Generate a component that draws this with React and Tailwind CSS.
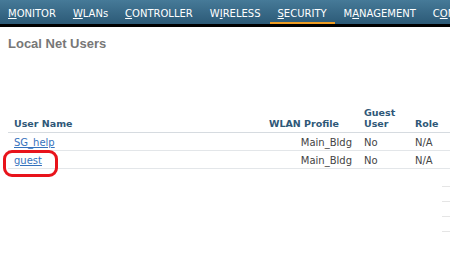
export default function App() {
  const nav = [
    { t: "MONITOR", u: 0 },
    { t: "WLANs", u: 0 },
    { t: "CONTROLLER", u: 0 },
    { t: "WIRELESS", u: 1 },
    { t: "SECURITY", u: 0, active: true },
    { t: "MANAGEMENT", u: 1 },
    { t: "COMMANDS", u: 1 },
  ];
  const rows = [
    { name: "SG_help", profile: "Main_Bldg", guest: "No", role: "N/A" },
    { name: "guest", profile: "Main_Bldg", guest: "No", role: "N/A" },
  ];
  const font = { fontFamily: '"DejaVu Sans", Verdana, sans-serif' };
  return (
    <div className="w-[450px] h-[255px] bg-white overflow-hidden relative" style={font}>
      <div className="h-[27px] bg-black">
        <div className="h-[24px] bg-gradient-to-b from-[#467a98] to-[#2c5a77] flex items-end whitespace-nowrap overflow-hidden">
          <div className="flex pl-[8px] gap-[17px] h-full">
            {nav.map((n) => (
              <div
                key={n.t}
                className={
                  "relative h-full flex items-center text-[10px] text-white pt-[2px] " +
                  (n.active ? "px-[8px] -mx-[8px]" : "")
                }
              >
                <span>
                  {n.t.slice(0, n.u)}
                  <span className="underline">{n.t[n.u]}</span>
                  {n.t.slice(n.u + 1)}
                </span>
                {n.active && (
                  <div className="absolute left-0 right-0 bottom-[-3px] h-[5px] bg-[#ef9c22]" />
                )}
              </div>
            ))}
          </div>
        </div>
      </div>

      <div
        className="pl-[8px] pt-[7px] text-[13px] font-bold text-[#777]"
        style={{ fontFamily: '"Liberation Sans", Arial, sans-serif' }}
      >
        Local Net Users
      </div>

      <div className="mt-[53px] ml-[8px]">
        <div className="flex items-end border-b border-[#d6dbe0] pb-[3px] text-[9.5px] font-bold text-[#2f5878] leading-[11px]">
          <div className="flex-1 pl-[6px]">User Name</div>
          <div className="w-[100px] text-right pr-[25px]">WLAN Profile</div>
          <div className="w-[51px]">Guest<br />User</div>
          <div className="w-[35px]">Role</div>
        </div>
        {rows.map((r) => (
          <div
            key={r.name}
            className="flex items-center h-[18px] pt-[2px] border-b border-[#e3e6e9] text-[10px] text-[#444]"
          >
            <div className="flex-1 pl-[6px] text-[#3572bd] underline">{r.name}</div>
            <div className="w-[100px] text-right pr-[12px]">{r.profile}</div>
            <div className="w-[51px]">{r.guest}</div>
            <div className="w-[35px]">{r.role}</div>
          </div>
        ))}
      </div>

      <div className="absolute left-[3px] top-[150px] w-[55px] h-[27px] rounded-[9px] border-[3px] border-[#e8131b]" />

      <div className="absolute right-0 top-[186px] flex flex-col gap-[14px] items-end">
        <div className="w-[8px] h-px bg-[#e5e5e5]" />
        <div className="w-[8px] h-px bg-[#e5e5e5]" />
        <div className="w-[8px] h-px bg-[#e5e5e5]" />
        <div className="w-[8px] h-px bg-[#e5e5e5]" />
      </div>
    </div>
  );
}
